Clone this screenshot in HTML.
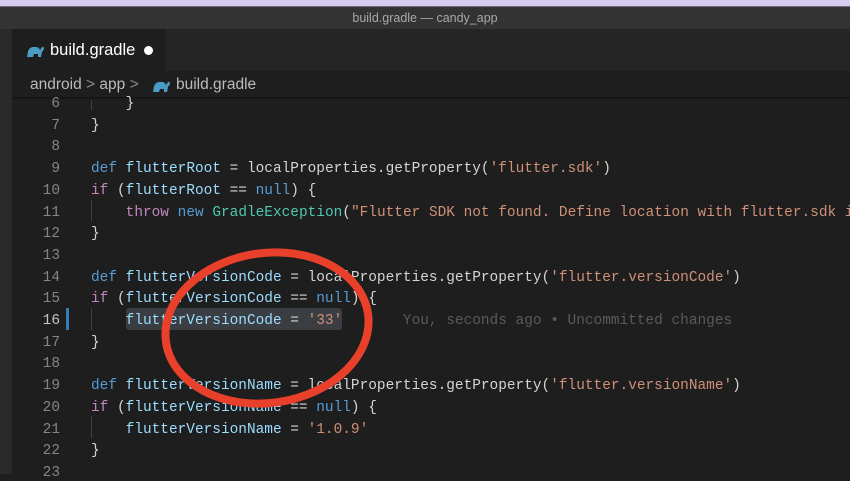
<!DOCTYPE html>
<html><head><style>
body{margin:0;width:850px;height:474px;overflow:hidden;background:#1e1e1e;font-family:"Liberation Sans",sans-serif;position:relative}
.abs{position:absolute}
.code{position:absolute;left:0;top:94px;font-family:"Liberation Mono",monospace;font-size:14.45px;color:#d4d4d4;white-space:pre}
.ln{position:absolute;left:12px;width:48px;text-align:right;color:#858585}
.tx{position:absolute;left:91px}
.k{color:#569cd6}.v{color:#9cdcfe}.c{color:#c586c0}.s{color:#ce9178}.t{color:#4ec9b0}
</style></head><body>
<div class="abs" style="left:0;top:0;width:850px;height:6px;background:#d6ccf0"></div>
<div class="abs" style="left:0;top:6px;width:850px;height:1px;background:#6a6780"></div>
<div class="abs" style="left:0;top:7px;width:850px;height:22px;background:#333;color:#a8a8a8;font-size:12.5px;text-align:center;line-height:22px">build.gradle — candy_app</div>
<div class="abs" style="left:0;top:29px;width:850px;height:42px;background:#252526"></div>
<div class="abs" style="left:0;top:29px;width:12px;height:445px;background:#2a2a2a"></div>
<div class="abs" style="left:12px;top:29px;width:154px;height:42px;background:#1e1e1e"></div>
<svg class="abs" style="left:25px;top:44px" width="20" height="14" viewBox="0 0 20 14"><path d="M2 13 L3 7 Q5 2 11 3 Q14 3 15 6 L17 3 Q19 2 19 5 L17 8 L16 13 L13 13 L13 10 L9 10 L8 13 Z" fill="#4a9cc4"/></svg>
<div class="abs" style="left:50px;top:41px;color:#fff;font-size:16.5px">build.gradle</div>
<div class="abs" style="left:144px;top:46px;width:9px;height:9px;border-radius:50%;background:#fff"></div>
<div class="abs" style="left:30px;top:76px;color:#bbb;font-size:15.5px">android <span style="color:#888">&gt;</span> app <span style="color:#888">&gt;</span></div>
<svg class="abs" style="left:151px;top:79px" width="20" height="14" viewBox="0 0 20 14"><path d="M2 13 L3 7 Q5 2 11 3 Q14 3 15 6 L17 3 Q19 2 19 5 L17 8 L16 13 L13 13 L13 10 L9 10 L8 13 Z" fill="#4a9cc4"/></svg>
<div class="abs" style="left:176px;top:76px;color:#bbb;font-size:15.5px">build.gradle</div>
<div class="abs" style="left:12px;top:97px;width:838px;height:3px;background:linear-gradient(#111,#1e1e1e)"></div>
<div class="abs" style="left:126px;top:308px;width:216px;height:22px;background:#3a3d41;border-radius:3px"></div>
<div class="abs" style="left:66px;top:308px;width:3px;height:22px;background:#2f7fb0"></div>
<div class="abs" style="left:91px;top:100px;width:1px;height:10px;background:#404040"></div>
<div class="abs" style="left:91px;top:200px;width:1px;height:21px;background:#404040"></div>
<div class="abs" style="left:91px;top:308px;width:1px;height:22px;background:#404040"></div>
<div class="abs" style="left:91px;top:416px;width:1px;height:22px;background:#404040"></div>
<div class="code">
<div class="ln" style="top:2px">6</div><div class="tx" style="top:2px">    }</div>
<div class="ln" style="top:23.7px">7</div><div class="tx" style="top:23.7px">}</div>
<div class="ln" style="top:45.4px">8</div>
<div class="ln" style="top:67.1px">9</div><div class="tx" style="top:67.1px"><span class="k">def</span> <span class="v">flutterRoot</span> = localProperties.getProperty(<span class="s">'flutter.sdk'</span>)</div>
<div class="ln" style="top:88.8px">10</div><div class="tx" style="top:88.8px"><span class="c">if</span> (<span class="v">flutterRoot</span> == <span class="k">null</span>) {</div>
<div class="ln" style="top:110.5px">11</div><div class="tx" style="top:110.5px">    <span class="c">throw</span> <span class="k">new</span> <span class="t">GradleException</span>(<span class="s">"Flutter SDK not found. Define location with flutter.sdk i</span></div>
<div class="ln" style="top:132.2px">12</div><div class="tx" style="top:132.2px">}</div>
<div class="ln" style="top:153.9px">13</div>
<div class="ln" style="top:175.6px">14</div><div class="tx" style="top:175.6px"><span class="k">def</span> <span class="v">flutterVersionCode</span> = localProperties.getProperty(<span class="s">'flutter.versionCode'</span>)</div>
<div class="ln" style="top:197.3px">15</div><div class="tx" style="top:197.3px"><span class="c">if</span> (<span class="v">flutterVersionCode</span> == <span class="k">null</span>) {</div>
<div class="ln" style="top:219px;color:#c6c6c6">16</div><div class="tx" style="top:219px">    <span class="v">flutterVersionCode</span> = <span class="s">'33'</span>       <span style="color:#5a5a5a">You, seconds ago • Uncommitted changes</span></div>
<div class="ln" style="top:240.7px">17</div><div class="tx" style="top:240.7px">}</div>
<div class="ln" style="top:262.4px">18</div>
<div class="ln" style="top:284.1px">19</div><div class="tx" style="top:284.1px"><span class="k">def</span> <span class="v">flutterVersionName</span> = localProperties.getProperty(<span class="s">'flutter.versionName'</span>)</div>
<div class="ln" style="top:305.8px">20</div><div class="tx" style="top:305.8px"><span class="c">if</span> (<span class="v">flutterVersionName</span> == <span class="k">null</span>) {</div>
<div class="ln" style="top:327.5px">21</div><div class="tx" style="top:327.5px">    <span class="v">flutterVersionName</span> = <span class="s">'1.0.9'</span></div>
<div class="ln" style="top:349.2px">22</div><div class="tx" style="top:349.2px">}</div>
<div class="ln" style="top:370.9px">23</div>
</div>
<svg class="abs" style="left:0;top:0" width="850" height="474"><ellipse cx="267" cy="328" rx="102" ry="75" transform="rotate(-8 267 328)" fill="none" stroke="#e8402a" stroke-width="8"/></svg>
</body></html>
